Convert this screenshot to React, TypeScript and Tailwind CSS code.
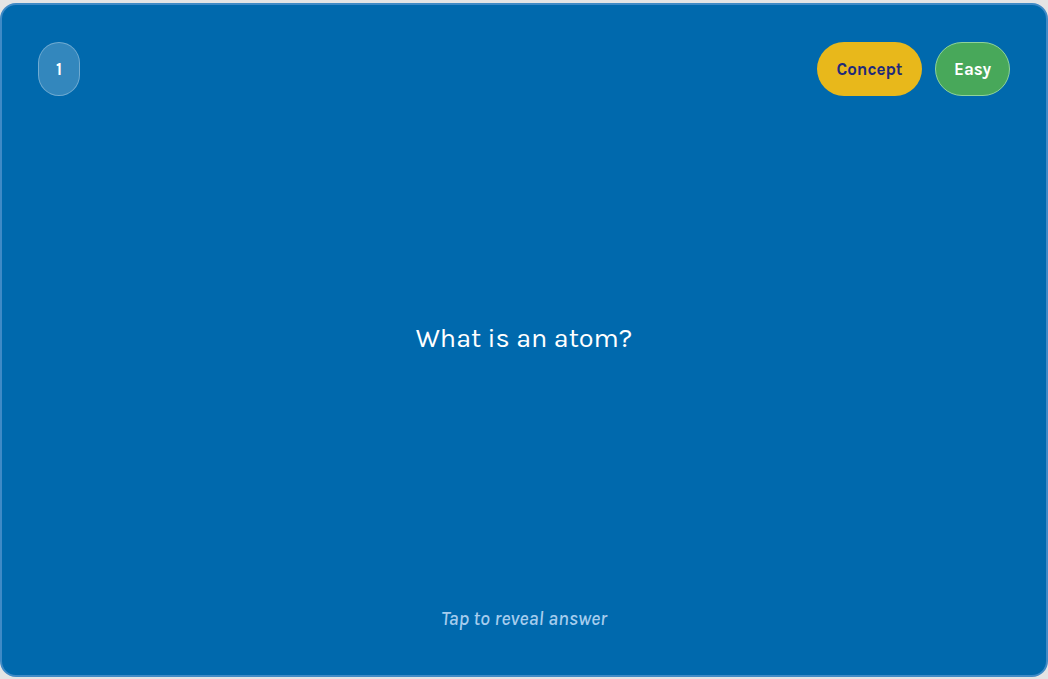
export default function App() {
  return (
    <div
      className="w-[1048px] h-[679px] bg-[#e4e4e4] pt-[3px] pb-[2px]"
      style={{ fontFamily: 'Karla, Lato, "Open Sans", sans-serif' }}
    >
      <div className="h-full w-full rounded-[16px] border-2 border-[#3f8ac6] bg-[#0069ad] flex flex-col px-[36px] pt-[37px] pb-[42px]">
        <div className="flex items-start justify-between">
          <div className="w-[42px] h-[54px] pt-px rounded-full bg-white/20 border border-white/30 flex items-center justify-center text-white text-[17px] font-bold">
            1
          </div>
          <div className="flex gap-[13px]">
            <div className="w-[105px] h-[54px] pt-px rounded-full bg-[#e8b81b] flex items-center justify-center text-[#1f2a7a] text-[17px] font-bold">
              Concept
            </div>
            <div className="w-[75px] h-[54px] pt-px rounded-full bg-[#48a85a] border border-[#8fd39a] flex items-center justify-center text-white text-[17px] font-bold">
              Easy
            </div>
          </div>
        </div>
        <div className="flex-1 flex items-center justify-center">
          <div className="text-white text-[27px] mb-[24px]">What is an atom?</div>
        </div>
        <div className="text-center italic font-medium text-[19.5px] text-[#a6cdee]">Tap to reveal answer</div>
      </div>
    </div>
  );
}
